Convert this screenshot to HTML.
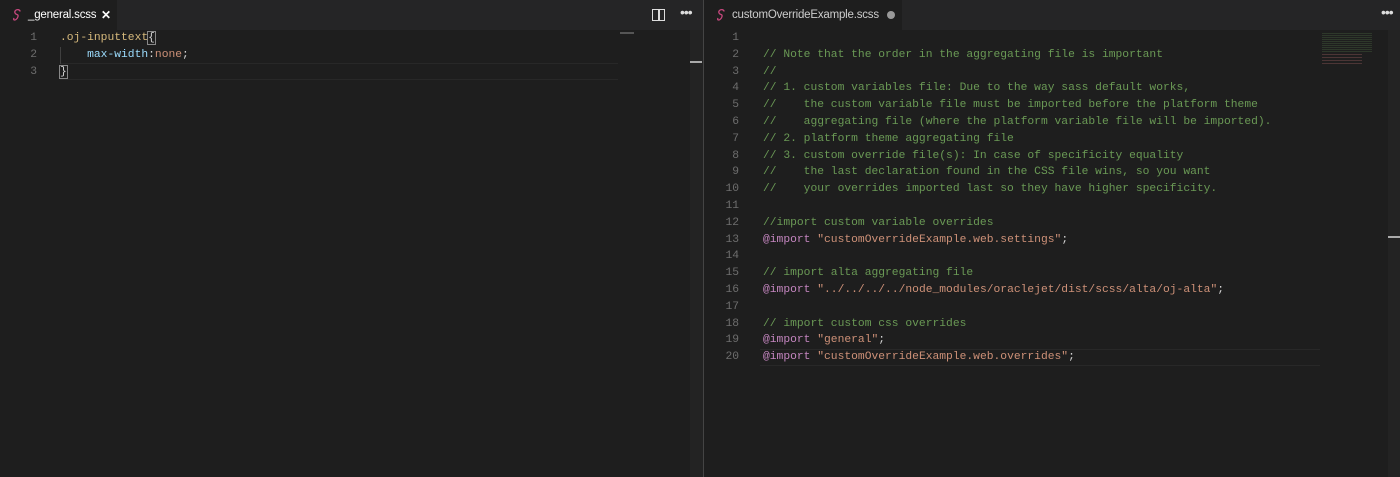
<!DOCTYPE html>
<html><head><style>
*{margin:0;padding:0;box-sizing:border-box}
body{width:1400px;height:477px;background:#1e1e1e;overflow:hidden;position:relative;font-family:"Liberation Sans",sans-serif}
.bar{position:absolute;top:0;height:30px;background:#252526}
.tab{position:absolute;top:0;height:30px;background:#1e1e1e;color:#fff;font-size:11.5px;line-height:30px;letter-spacing:-0.2px}
.code{position:absolute;font-family:"Liberation Mono",monospace;font-size:11.3px;line-height:16.8px;white-space:pre;color:#d4d4d4}
.ln{position:absolute;font-family:"Liberation Mono",monospace;font-size:11.3px;line-height:16.8px;color:#6e6e6e;text-align:right;white-space:pre}
.c{color:#6a9955}.k{color:#c586c0}.s{color:#ce9178}.sel{color:#d7ba7d}.p{color:#9cdcfe}
.hl{position:absolute;height:17px;border-top:1px solid #282828;border-bottom:1px solid #282828}
</style></head><body>
<div class="bar" style="left:0;width:703px"></div>
<div class="bar" style="left:704px;width:696px"></div>
<div style="position:absolute;left:703px;top:0;width:1px;height:477px;background:#444"></div>
<div class="tab" style="left:0;width:117px"><svg style="position:absolute;left:11px;top:8px" width="12" height="14" viewBox="0 0 12 14"><path d="M9 3.5C9 1.5 6 1 4.5 2.5C3 4 4 6 6 6.5C8 7 7 10 5 11.5C3.5 12.5 2 12 3 10" fill="none" stroke="#c5477d" stroke-width="1.3"/></svg><span style="position:absolute;left:28px">_general.scss</span><span style="position:absolute;left:101px;font-weight:bold;font-size:12px">✕</span></div>
<div style="position:absolute;left:652px;top:9px;width:13px;height:12px;border:1.5px solid #ddd"></div><div style="position:absolute;left:658px;top:10px;width:1.5px;height:10px;background:#ddd"></div>
<div style="position:absolute;left:680px;top:4px;color:#ddd;font-size:14px;letter-spacing:-1px">•••</div>
<div class="tab" style="left:704px;width:198px;color:#ccc"><svg style="position:absolute;left:11px;top:8px" width="12" height="14" viewBox="0 0 12 14"><path d="M9 3.5C9 1.5 6 1 4.5 2.5C3 4 4 6 6 6.5C8 7 7 10 5 11.5C3.5 12.5 2 12 3 10" fill="none" stroke="#c5477d" stroke-width="1.3"/></svg><span style="position:absolute;left:28px">customOverrideExample.scss</span><span style="position:absolute;left:183px;top:11px;width:8px;height:8px;border-radius:50%;background:#999"></span></div>
<div style="position:absolute;left:1381px;top:4px;color:#ddd;font-size:14px;letter-spacing:-1px">•••</div>
<div style="position:absolute;left:690px;top:30px;width:13px;height:447px;background:#232323"></div>
<div style="position:absolute;left:690px;top:61px;width:12px;height:2px;background:#aaa"></div>
<div style="position:absolute;left:1388px;top:30px;width:12px;height:447px;background:#232323"></div>
<div style="position:absolute;left:1388px;top:236px;width:12px;height:2px;background:#aaa"></div>
<div class="hl" style="left:60px;width:558px;top:63px"></div>
<div class="hl" style="left:760px;width:560px;top:349px"></div>
<div class="ln" style="left:10px;width:27px;top:30px">1
2
3</div>
<div class="code" style="left:60px;top:30px"><span class="sel">.oj-inputtext</span><span style="outline:1px solid #888">{</span>
    <span class="p">max-width</span>:<span class="s">none</span>;
<span style="outline:1px solid #888">}</span></div>
<div style="position:absolute;left:60px;top:47px;width:1px;height:17px;background:#404040"></div>
<div class="ln" style="left:712px;width:27px;top:30px">1
2
3
4
5
6
7
8
9
10
11
12
13
14
15
16
17
18
19
20</div>
<div class="code" style="left:763px;top:30px">
<span class="c">// Note that the order in the aggregating file is important
//
// 1. custom variables file: Due to the way sass default works,
//    the custom variable file must be imported before the platform theme
//    aggregating file (where the platform variable file will be imported).
// 2. platform theme aggregating file
// 3. custom override file(s): In case of specificity equality
//    the last declaration found in the CSS file wins, so you want
//    your overrides imported last so they have higher specificity.</span>

<span class="c">//import custom variable overrides</span>
<span class="k">@import</span> <span class="s">"customOverrideExample.web.settings"</span>;

<span class="c">// import alta aggregating file</span>
<span class="k">@import</span> <span class="s">"../../../../node_modules/oraclejet/dist/scss/alta/oj-alta"</span>;

<span class="c">// import custom css overrides</span>
<span class="k">@import</span> <span class="s">"general"</span>;
<span class="k">@import</span> <span class="s">"customOverrideExample.web.overrides"</span>;</div>
<div style="position:absolute;left:1322px;top:32px;width:50px;height:20px;opacity:.35;background:repeating-linear-gradient(#1e1e1e 0 1px,#4a6a3f 1px 2px)"></div>
<div style="position:absolute;left:1322px;top:52px;width:40px;height:14px;opacity:.35;background:repeating-linear-gradient(#1e1e1e 0 2px,#a06060 2px 3px)"></div>
<div style="position:absolute;left:620px;top:32px;width:14px;height:2px;background:#555"></div>
</body></html>
